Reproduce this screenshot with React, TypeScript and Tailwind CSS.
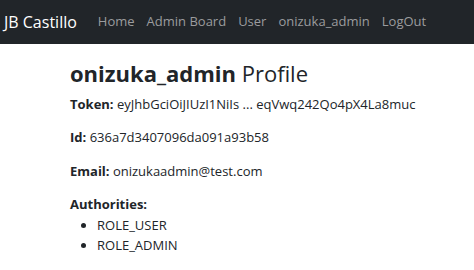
export default function App() {
  const links = ['Home', 'Admin Board', 'User', 'onizuka_admin', 'LogOut'];

  return (
    <div className="w-[474px] h-[270px] bg-white overflow-hidden font-['Segoe_UI','Open_Sans',sans-serif] text-[#212529]">
      {/* Navbar */}
      <nav className="h-[44px] bg-[#212529] flex items-center pl-[4px]">
        <span className="text-white text-[16px] leading-none mr-[21px]">JB Castillo</span>
        <div className="flex items-center gap-[12px] text-[13px] text-[#9b9c9e]">
          {links.map((l) => (
            <span key={l}>{l}</span>
          ))}
        </div>
      </nav>

      {/* Profile */}
      <div className="pl-[70px] pt-[15px]">
        <h3 className="text-[22px] leading-[28px] mb-[7px]">
          <strong>onizuka_admin</strong> Profile
        </h3>
        <p className="text-[13px] leading-[20px] mb-[13px]">
          <strong>Token:</strong> eyJhbGciOiJIUzI1NiIs ... eqVwq242Qo4pX4La8muc
        </p>
        <p className="text-[13px] leading-[20px] mb-[14px]">
          <strong>Id:</strong> 636a7d3407096da091a93b58
        </p>
        <p className="text-[13px] leading-[20px] mb-[13px]">
          <strong>Email:</strong> onizukaadmin@test.com
        </p>
        <strong className="block text-[13px] leading-[20px] mb-[1px]">Authorities:</strong>
        <ul className="list-disc pl-[27px] text-[13px] leading-[20px]">
          <li>ROLE_USER</li>
          <li>ROLE_ADMIN</li>
        </ul>
      </div>
    </div>
  );
}
